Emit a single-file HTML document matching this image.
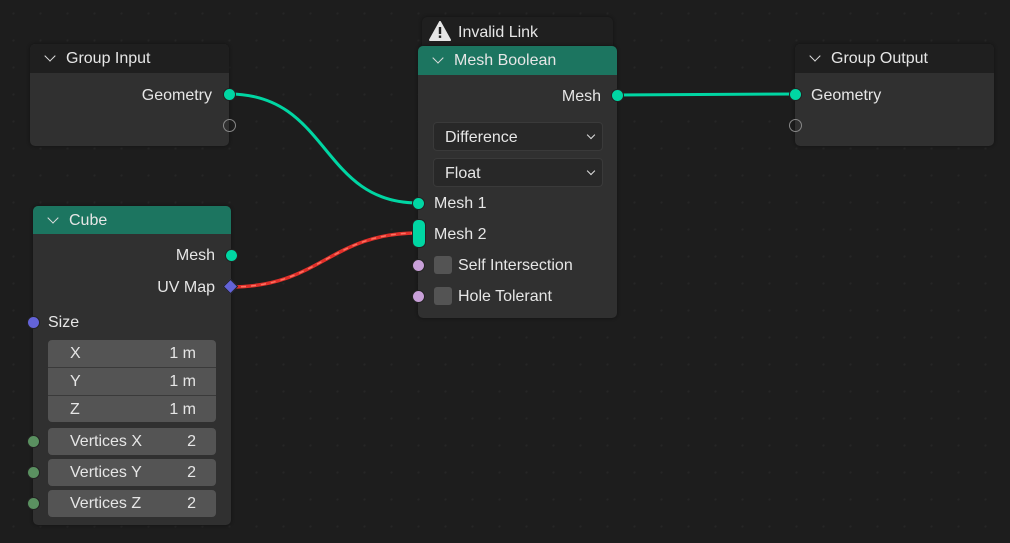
<!DOCTYPE html><html><head><style>
body{margin:0;width:1010px;height:543px;overflow:hidden;background:#1d1d1d;background-image:radial-gradient(#262626 1px,transparent 1.2px);background-size:27px 27px;font-family:"Liberation Sans",sans-serif;color:#e6e6e6;font-size:16px;position:relative}
.n{position:absolute;background:#303030;border-radius:5px;box-shadow:0 0 3px #111;overflow:visible}
.h{height:29px;line-height:30px;border-radius:5px 5px 0 0;padding-left:36px;position:relative}
.h:before{content:"";position:absolute;left:16px;top:8px;width:7px;height:7px;border-right:1.7px solid #ddd;border-bottom:1.7px solid #ddd;transform:rotate(45deg)}
.t{position:absolute;white-space:nowrap;margin-top:1px}
.s{position:absolute;width:11px;height:11px;border-radius:50%;border:1px solid #222;margin:-6.5px 0 0 -6.5px}
.f{position:absolute;background:#545454;border-radius:4px}
.dd{position:absolute;background:#282828;border:1px solid #3a3a3a;border-radius:4px;left:15px;width:168px;height:27px;line-height:29px}
.dd span{position:absolute;left:11px}
.dd:after{content:"";position:absolute;right:8px;top:9px;width:5px;height:5px;border-right:1.4px solid #ddd;border-bottom:1.4px solid #ddd;transform:rotate(45deg)}
.cb{position:absolute;left:16px;width:18px;height:18px;background:#545454;border-radius:3px}
</style></head><body>
<svg style="position:absolute;left:0;top:0" width="1010" height="543">
<path d="M229 94 C330 94 320 203 418 203" stroke="#00d6a3" stroke-width="3" fill="none"/>
<path d="M617 95 L795 94" stroke="#00d6a3" stroke-width="3" fill="none"/>
<path d="M231 287 C320 287 330 233 418 233" stroke="#e0302a" stroke-width="3.5" fill="none"/>
<path d="M231 287 C320 287 330 233 418 233" stroke="#ff7060" stroke-width="1.5" stroke-dasharray="5 5" fill="none"/>
</svg>

<div class="n" style="left:30px;top:44px;width:199px;height:102px">
<div class="h" style="background:#1f1f1f">Group Input</div>
<div class="t" style="right:17px;top:42px">Geometry</div>
<div class="s" style="left:199px;top:50px;background:#00d6a3"></div>
<div class="s" style="left:199px;top:81px;background:none;border:1.5px solid #888"></div>
</div>

<div class="n" style="left:795px;top:44px;width:199px;height:102px">
<div class="h" style="background:#1f1f1f">Group Output</div>
<div class="t" style="left:16px;top:42px">Geometry</div>
<div class="s" style="left:0;top:50px;background:#00d6a3"></div>
<div class="s" style="left:0;top:81px;background:none;border:1.5px solid #888"></div>
</div>

<div class="n" style="left:422px;top:17px;width:191px;height:40px;background:#1f1f1f;border-radius:5px">
<svg style="position:absolute;left:7px;top:4px" width="22" height="20"><path d="M11 1 L21 19 L1 19Z" fill="#e6e6e6" stroke="#e6e6e6" stroke-linejoin="round" stroke-width="2"/><rect x="9.8" y="6" width="2.4" height="7" fill="#1f1f1f"/><rect x="9.8" y="14.5" width="2.4" height="2.4" fill="#1f1f1f"/></svg>
<div class="t" style="left:36px;top:6px">Invalid Link</div>
</div>

<div class="n" style="left:418px;top:46px;width:199px;height:272px">
<div class="h" style="background:#1c7560">Mesh Boolean</div>
<div class="t" style="right:16px;top:41px">Mesh</div>
<div class="s" style="left:199px;top:49px;background:#00d6a3"></div>
<div class="dd" style="top:76px"><span>Difference</span></div>
<div class="dd" style="top:112px"><span>Float</span></div>
<div class="t" style="left:16px;top:148px">Mesh 1</div>
<div class="s" style="left:0;top:157px;background:#00d6a3"></div>
<div class="t" style="left:16px;top:179px">Mesh 2</div>
<div style="position:absolute;left:-6px;top:173px;width:12px;height:27px;border-radius:6px;background:#00d6a3;border:1px solid #222"></div>
<div class="cb" style="top:210px"></div><div class="t" style="left:40px;top:210px">Self Intersection</div>
<div class="s" style="left:0;top:219px;background:#c8a0d8"></div>
<div class="cb" style="top:241px"></div><div class="t" style="left:40px;top:241px">Hole Tolerant</div>
<div class="s" style="left:0;top:250px;background:#c8a0d8"></div>
</div>

<div class="n" style="left:33px;top:206px;width:198px;height:319px">
<div class="h" style="background:#1c7560;height:28px">Cube</div>
<div class="t" style="right:16px;top:40px">Mesh</div>
<div class="s" style="left:198px;top:49px;background:#00d6a3"></div>
<div class="t" style="right:16px;top:72px">UV Map</div>
<div style="position:absolute;left:192px;top:75px;width:9px;height:9px;background:#6363d8;transform:rotate(45deg);border:1px solid #222"></div>
<div class="t" style="left:15px;top:107px">Size</div>
<div class="s" style="left:0;top:116px;background:#6363d8"></div>
<div class="f" style="left:15px;top:134px;width:168px;height:82px;background:#545454"></div>
<div style="position:absolute;left:15px;top:161px;width:168px;height:1px;background:#3a3a3a"></div>
<div style="position:absolute;left:15px;top:189px;width:168px;height:1px;background:#3a3a3a"></div>
<div class="t" style="left:37px;top:138px">X</div><div class="t" style="right:35px;top:138px">1 m</div>
<div class="t" style="left:37px;top:166px">Y</div><div class="t" style="right:35px;top:166px">1 m</div>
<div class="t" style="left:37px;top:194px">Z</div><div class="t" style="right:35px;top:194px">1 m</div>
<div class="f" style="left:15px;top:222px;width:168px;height:27px"></div>
<div class="t" style="left:37px;top:226px">Vertices X</div><div class="t" style="right:35px;top:226px">2</div>
<div class="s" style="left:0;top:235px;background:#5a9060"></div>
<div class="f" style="left:15px;top:253px;width:168px;height:27px"></div>
<div class="t" style="left:37px;top:257px">Vertices Y</div><div class="t" style="right:35px;top:257px">2</div>
<div class="s" style="left:0;top:266px;background:#5a9060"></div>
<div class="f" style="left:15px;top:284px;width:168px;height:27px"></div>
<div class="t" style="left:37px;top:288px">Vertices Z</div><div class="t" style="right:35px;top:288px">2</div>
<div class="s" style="left:0;top:297px;background:#5a9060"></div>
</div>
</body></html>
